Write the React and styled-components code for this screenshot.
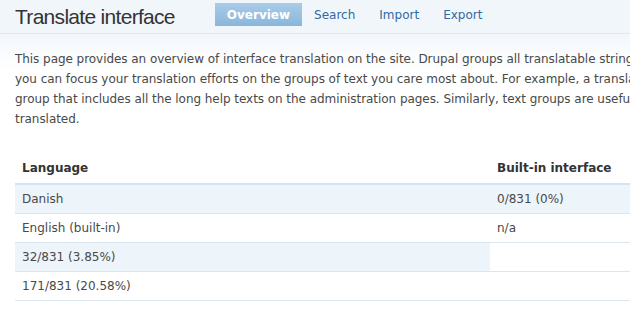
import React from 'react';
import styled, { createGlobalStyle } from 'styled-components';

const Global = createGlobalStyle`
  html, body {
    margin: 0;
    padding: 0;
    background: #fff;
    overflow: hidden;
  }
  body {
    font-family: "DejaVu Sans", Verdana, sans-serif;
    color: #494949;
  }
`;

const Page = styled.div`
  width: 820px;
  background: linear-gradient(#f1f6fb 0px, #f1f6fb 34px, #f6f9fc 42px, #ffffff 72px);
`;

const Header = styled.div`
  display: flex;
  align-items: center;
  height: 33px;
  padding: 0 15px;
  border-bottom: 1px solid #dfe8f0;
`;

const Title = styled.h1`
  margin: 0 40px 0 0;
  font-family: "Liberation Sans", Helvetica, sans-serif;
  font-weight: normal;
  font-size: 21px;
  letter-spacing: -0.7px;
  color: #333;
`;

const Tabs = styled.ul`
  display: flex;
  list-style: none;
  margin: 0;
  padding: 0;
`;

const Tab = styled.li`
  font-size: 12px;
  height: 23px;
  display: flex;
  align-items: center;
  padding: 0 12px;
  margin-top: -4px;
  color: ${p => (p.$active ? '#fff' : '#2f6aa5')};
  font-weight: ${p => (p.$active ? 'bold' : 'normal')};
  background: ${p => (p.$active ? 'linear-gradient(#a9cce8, #8ab6db)' : 'transparent')};
`;

const Content = styled.div`
  padding: 0 15px;
`;

const Intro = styled.p`
  margin: 15px 0 0;
  font-size: 12px;
  line-height: 20px;
  letter-spacing: -0.05px;
  white-space: nowrap;
`;

const Table = styled.table`
  margin-top: 23px;
  width: 100%;
  border-collapse: collapse;
  font-size: 12px;
`;

const Th = styled.th`
  text-align: left;
  font-weight: bold;
  color: #333;
  padding: 0 7px;
  height: 31px;
  border-bottom: 2px solid #d3e3f0;
  width: ${p => p.$w || 'auto'};
`;

const Row = styled.tr`
  border-bottom: 1px solid #dbe7f0;
`;

const Td = styled.td`
  padding: 0 7px;
  height: 28px;
  background: ${p => (p.$shade ? '#edf4fa' : 'transparent')};
`;

export default function App() {
  return (
    <>
      <Global />
      <Page>
        <Header>
          <Title>Translate interface</Title>
          <Tabs>
            <Tab $active>Overview</Tab>
            <Tab>Search</Tab>
            <Tab>Import</Tab>
            <Tab>Export</Tab>
          </Tabs>
        </Header>
        <Content>
          <Intro>
            This page provides an overview of interface translation on the site. Drupal groups all translatable strings in so called 'text groups' so that
            <br />
            you can focus your translation efforts on the groups of text you care most about. For example, a translation team could choose to first translate the built-in interface
            <br />
            group that includes all the long help texts on the administration pages. Similarly, text groups are useful for ensuring that important content is
            <br />
            translated.
          </Intro>
          <Table>
            <thead>
              <tr>
                <Th $w="461px">Language</Th>
                <Th>Built-in interface</Th>
              </tr>
            </thead>
            <tbody>
              <Row>
                <Td $shade>Danish</Td>
                <Td $shade>0/831 (0%)</Td>
              </Row>
              <Row>
                <Td>English (built-in)</Td>
                <Td>n/a</Td>
              </Row>
              <Row>
                <Td $shade>32/831 (3.85%)</Td>
                <Td></Td>
              </Row>
              <Row>
                <Td>171/831 (20.58%)</Td>
                <Td></Td>
              </Row>
            </tbody>
          </Table>
        </Content>
      </Page>
    </>
  );
}
